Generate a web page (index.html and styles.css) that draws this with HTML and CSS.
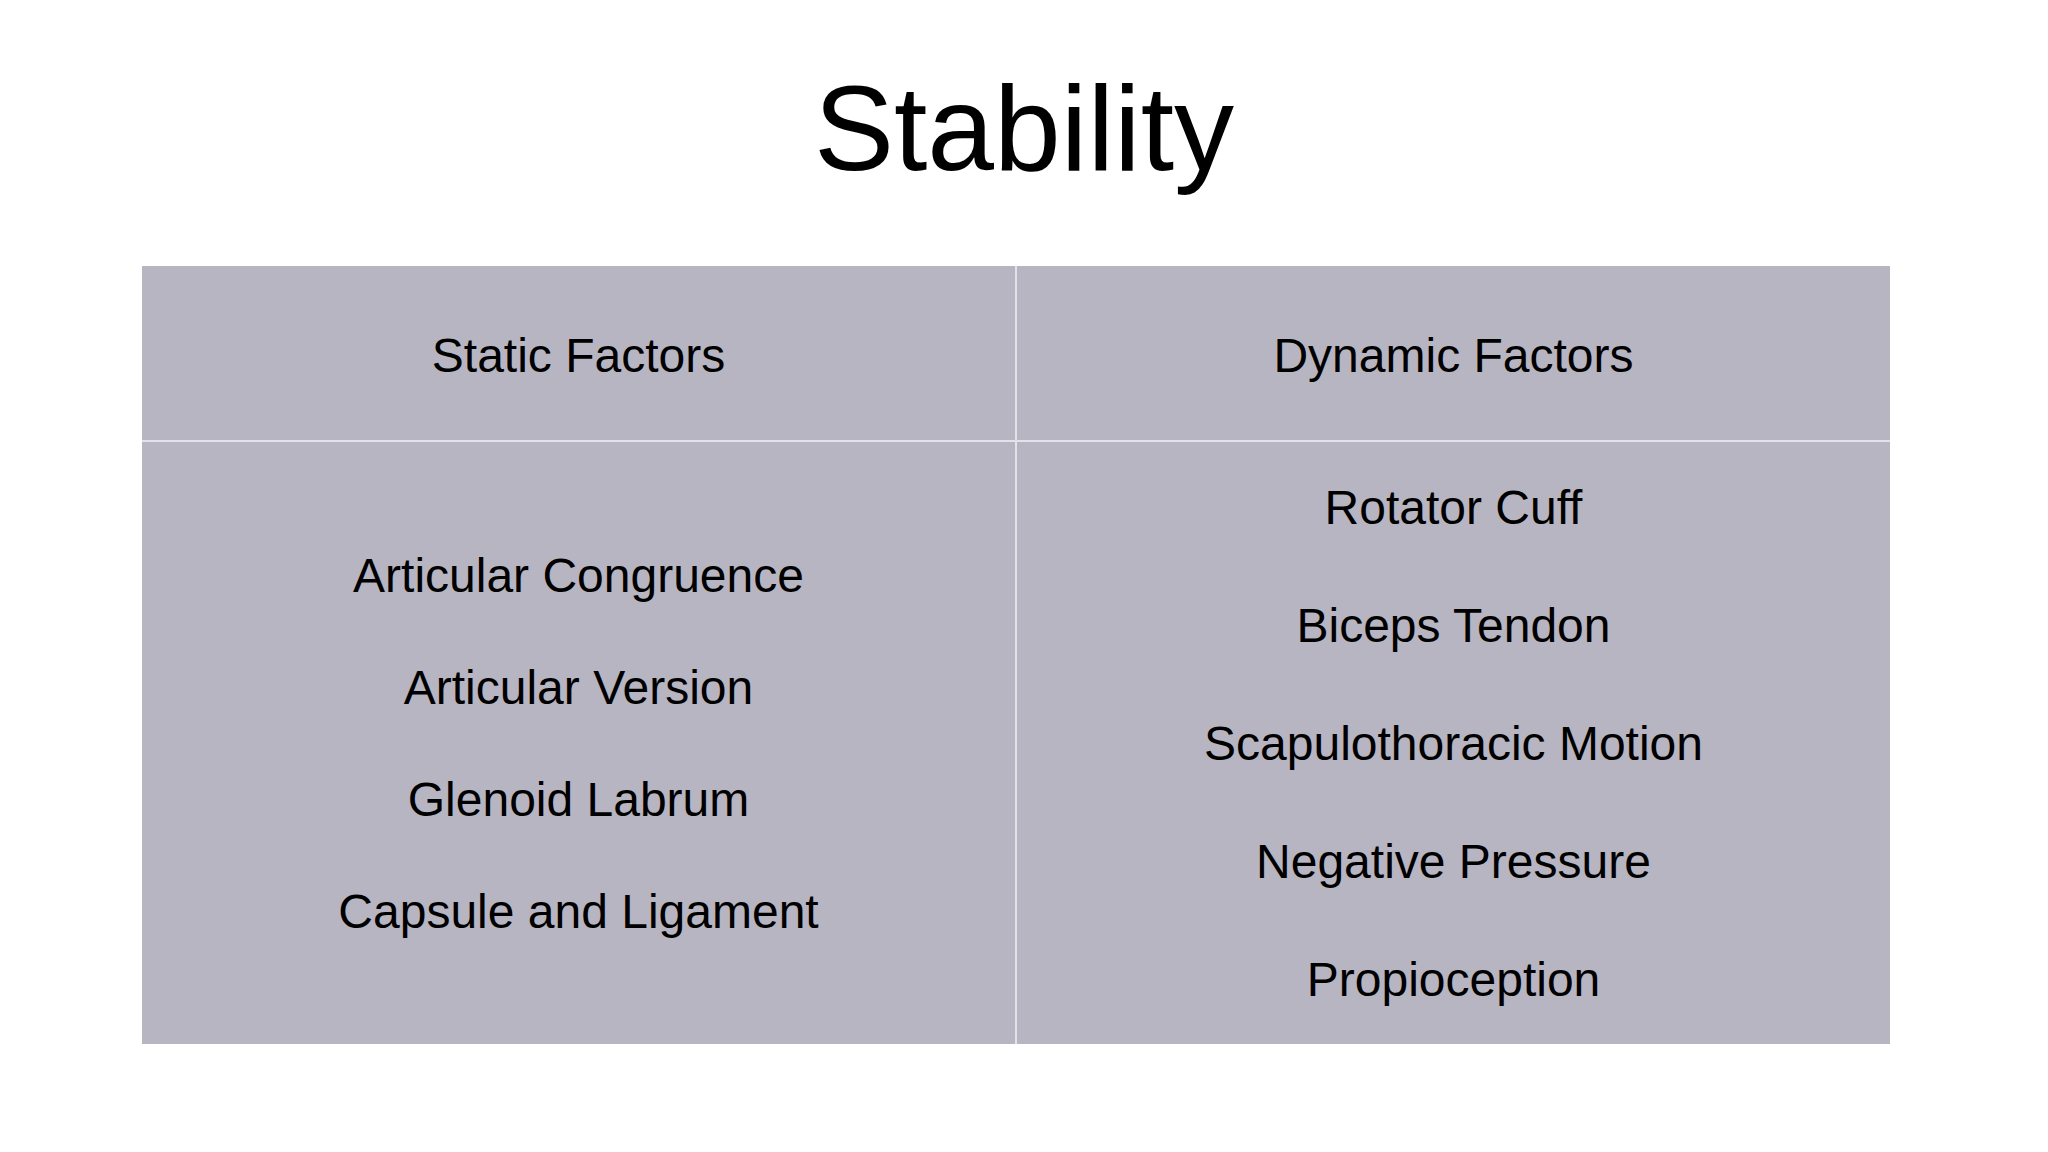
FILE: index.html
```html
<!DOCTYPE html>
<html lang="en">
<head>
<meta charset="utf-8">
<title>Stability</title>
<link rel="stylesheet" href="styles.css">
</head>
<body>
<main class="slide">
  <h1 class="title">Stability</h1>
  <div class="table">
    <div class="cell head">Static Factors</div>
    <div class="cell head">Dynamic Factors</div>
    <div class="cell body static">
      <p>Articular Congruence</p>
      <p>Articular Version</p>
      <p>Glenoid Labrum</p>
      <p>Capsule and Ligament</p>
    </div>
    <div class="cell body dynamic">
      <p>Rotator Cuff</p>
      <p>Biceps Tendon</p>
      <p>Scapulothoracic Motion</p>
      <p>Negative Pressure</p>
      <p>Propioception</p>
    </div>
  </div>
</main>
</body>
</html>
```
FILE: styles.css
```css
html, body {
  margin: 0;
  padding: 0;
  background: #ffffff;
}

body {
  width: 2048px;
  height: 1152px;
  overflow: hidden;
  font-family: "Liberation Sans", Arial, sans-serif;
  color: #000000;
}

.slide {
  display: flex;
  flex-direction: column;
  padding: 68px 0 0 142px;
}

.title {
  margin: 0 0 78px -142px;
  width: 2048px;
  text-align: center;
  font-size: 120px;
  font-weight: normal;
  line-height: 120px;
}

.table {
  display: grid;
  grid-template-columns: 873px 873px;
  grid-template-rows: 174px 602px;
  gap: 2px;
  width: 1748px;
  background: #e3e2e9;
}

.cell {
  background: #b7b5c1;
  display: flex;
  flex-direction: column;
  align-items: center;
  justify-content: center;
  font-size: 48px;
  text-align: center;
}

.head {
  line-height: 56px;
  padding-top: 5px;
}

.body {
  padding-top: 2px;
}

.body p {
  margin: 0;
}

.static p {
  line-height: 112px;
}

.dynamic p {
  line-height: 118px;
}
```
